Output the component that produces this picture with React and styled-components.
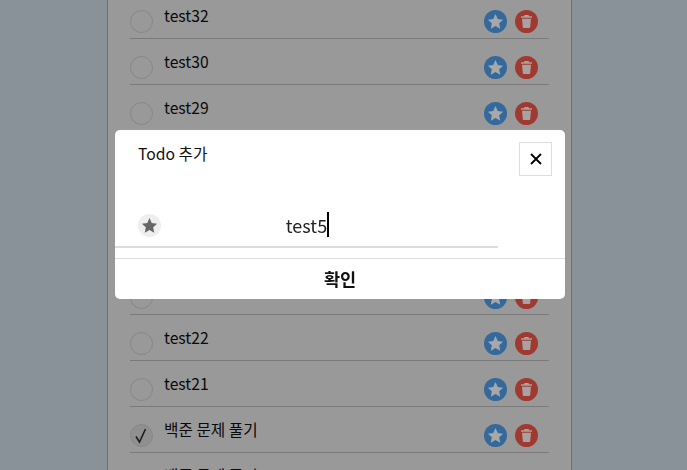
import React from "react";
import styled, { createGlobalStyle } from "styled-components";

const GlobalStyle = createGlobalStyle`
  html, body {
    margin: 0;
    height: 100%;
    overflow: hidden;
    background: #e6f3ff;
    font-family: "Noto Sans CJK KR", "Noto Sans", sans-serif;
  }
`;

const Page = styled.div`
  width: 465px;
  margin: -7px 0 0 107px;
  padding: 0 22px;
  box-sizing: border-box;
  background: #fff;
  border-left: 1px solid #ffa08c;
  border-right: 1px solid #ffa08c;
`;

const Row = styled.div`
  height: 46px;
  box-sizing: border-box;
  display: flex;
  align-items: flex-start;
  padding-top: 17px;
  border-bottom: 1px solid #ccc;
`;

const Check = styled.span`
  width: 23px;
  height: 23px;
  box-sizing: border-box;
  border: 1px solid #e0e0e0;
  border-radius: 50%;
  background: ${(p) => (p.$done ? "#f0f0f0" : "#fff")};
  display: flex;
  align-items: center;
  justify-content: center;
`;

const Label = styled.span`
  flex: 1;
  margin: -6px 0 0 11px;
  font-size: 15.7px;
  line-height: 24px;
  color: #111;
`;

const Round = styled.span`
  position: relative;
  z-index: 2;
  width: 23px;
  height: 23px;
  margin-left: 8px;
  border-radius: 50%;
  background: ${(p) => p.$bg};
  display: flex;
  align-items: center;
  justify-content: center;
  &:last-child {
    margin-right: 11px;
  }
`;

const Overlay = styled.div`
  position: fixed;
  inset: 0;
  z-index: 1;
  background: rgba(0, 0, 0, 0.4);
`;

const Modal = styled.div`
  position: fixed;
  z-index: 3;
  left: 115px;
  top: 130px;
  width: 450px;
  height: 169px;
  box-sizing: border-box;
  background: #fff;
  border-radius: 5px;
  display: flex;
  flex-direction: column;
`;

const Head = styled.div`
  display: flex;
  justify-content: space-between;
  align-items: flex-start;
  padding: 12px 13px 0 23px;
  height: 76px;
  box-sizing: border-box;
  font-size: 15.7px;
  line-height: 24px;
  color: #111;
`;

const Close = styled.button`
  width: 33px;
  height: 34px;
  padding: 0;
  background: #fff;
  border: 1px solid #ddd;
  display: flex;
  align-items: center;
  justify-content: center;
`;

const InputRow = styled.div`
  position: relative;
  width: 383px;
  height: 42px;
  box-sizing: border-box;
  border-bottom: 2px solid #ddd;
  padding-top: 6px;
`;

const StarChip = styled.span`
  position: absolute;
  left: 23px;
  top: 8px;
  width: 23px;
  height: 23px;
  border-radius: 50%;
  background: #eee;
  display: flex;
  align-items: center;
  justify-content: center;
`;

const InputText = styled.div`
  text-align: center;
  padding-left: 2px;
  font-size: 18px;
  line-height: 26px;
  color: #222;
`;

const Caret = styled.span`
  display: inline-block;
  width: 2px;
  height: 25px;
  background: #000;
  vertical-align: top;
`;

const Confirm = styled.button`
  margin-top: 10px;
  padding: 0 0 1px;
  flex: 1;
  background: none;
  border: 0;
  border-top: 1px solid #ddd;
  font: 700 17.5px "Noto Sans CJK KR", sans-serif;
  color: #111;
`;

const Star = ({ size, color }) => (
  <svg width={size} height={size} viewBox="0 0 24 24">
    <path
      fill={color}
      d="M12 1.500l3.200 7 7.600.9-5.600 5.200 1.500 7.600L12 18.400l-6.700 3.800 1.500-7.600L1.200 9.400l7.600-.9z"
    />
  </svg>
);

const Trash = () => (
  <svg width="15" height="15" viewBox="0 0 15 15">
    <path
      fill="#a8a2a0"
      d="M5.500 1h4l.6 1.200h2.900v1.500H2V2.200h2.900zM3 4.700h9l-.8 8.300c0 .6-.5 1-1 1H4.800c-.5 0-1-.4-1-1z"
    />
  </svg>
);

const Tick = () => (
  <svg width="21" height="21" viewBox="0 0 21 21">
    <path d="M5 11.500l3.500 5.500L14.500 4" fill="none" stroke="#333" strokeWidth="1.600" />
  </svg>
);

const rows = [
  ["test32"],
  ["test30"],
  ["test29"],
  ["test28"],
  ["test27"],
  ["test26"],
  ["test23"],
  ["test22"],
  ["test21"],
  ["백준 문제 풀기", true],
  ["백준 문제 풀기"],
];

export default function App() {
  return (
    <>
      <GlobalStyle />
      <Page>
        {rows.map(([text, done], i) => (
          <Row key={i}>
            <Check $done={done}>{done && <Tick />}</Check>
            <Label>{text}</Label>
            <Round $bg="#35699c"><Star size={17} color="#a6a8aa" /></Round>
            <Round $bg="#a03a31"><Trash /></Round>
          </Row>
        ))}
      </Page>
      <Overlay />
      <Modal>
        <Head>
          Todo 추가
          <Close>
            <svg width="12" height="12" viewBox="0 0 12 12">
              <path d="M1 1l10 10M11 1L1 11" stroke="#000" strokeWidth="1.8" />
            </svg>
          </Close>
        </Head>
        <InputRow>
          <StarChip><Star size={17} color="#666" /></StarChip>
          <InputText>test5<Caret /></InputText>
        </InputRow>
        <Confirm>확인</Confirm>
      </Modal>
    </>
  );
}
